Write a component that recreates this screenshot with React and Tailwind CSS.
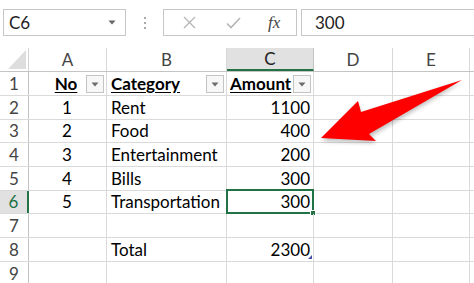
import React from 'react';

const cols = ['A', 'B', 'C', 'D', 'E'];
const colW = ['w-[78px]', 'w-[120px]', 'w-[87px]', 'w-[79px]', 'w-[77px]'];

const rows = [
  { no: '', cat: '', amt: '', header: true },
  { no: '1', cat: 'Rent', amt: '1100' },
  { no: '2', cat: 'Food', amt: '400' },
  { no: '3', cat: 'Entertainment', amt: '200' },
  { no: '4', cat: 'Bills', amt: '300' },
  { no: '5', cat: 'Transportation', amt: '300', selected: true },
  { no: '', cat: '', amt: '' },
  { no: '', cat: 'Total', amt: '2300', total: true },
  { no: '', cat: '', amt: '' },
];

const rowH = ['h-[24px]', 'h-[24px]', 'h-[23px]', 'h-[24px]', 'h-[24px]', 'h-[23px]', 'h-[24px]', 'h-[24px]', 'h-[24px]'];

const FilterBtn = () => (
  <div className="absolute right-[2px] top-[3px] w-[18px] h-[18px] border border-[#c4c4c4] bg-[#f7f7f7] flex items-center justify-center">
    <svg width="8" height="5" viewBox="0 0 8 5"><path d="M0.5 0.5 L7.5 0.5 L4 4.5 Z" fill="#6b6b6b" /></svg>
  </div>
);

const App = () => {
  return (
    <div className="w-[474px] h-[283px] bg-white overflow-hidden relative" style={{ fontFamily: 'Lato, "Liberation Sans", sans-serif' }}>
      {/* formula bar */}
      <div className="flex items-center h-[48px] pb-[3px]">
        <div className="ml-[3px] w-[123px] h-[27px] border border-[#c6c6c6] flex items-center justify-between pl-[5px] pr-[9px]">
          <span className="text-[17px] text-[#222]">C6</span>
          <svg width="8" height="5" viewBox="0 0 8 5"><path d="M0.5 0.5 L7.5 0.5 L4 4.5 Z" fill="#666" /></svg>
        </div>
        <div className="w-[37px] flex flex-col items-center gap-[3px]">
          <span className="w-[2px] h-[2px] bg-[#aaa]" />
          <span className="w-[2px] h-[2px] bg-[#aaa]" />
          <span className="w-[2px] h-[2px] bg-[#aaa]" />
        </div>
        <div className="w-[134px] h-[27px] border border-[#c6c6c6] flex items-center">
          <svg className="ml-[19px]" width="13" height="13" viewBox="0 0 13 13"><path d="M1 1 L12 12 M12 1 L1 12" stroke="#b5b5b5" strokeWidth="1.3" /></svg>
          <svg className="ml-[30px]" width="15" height="12" viewBox="0 0 15 12"><path d="M1 6.5 L5 10.5 L14 1" stroke="#b5b5b5" strokeWidth="1.6" fill="none" /></svg>
          <span className="ml-[27px] text-[17px] italic text-[#444]" style={{ fontFamily: '"Liberation Serif", serif' }}>fx</span>
        </div>
        <div className="ml-[4px] flex-1 h-[27px] border-y border-l border-[#c6c6c6] flex items-center pl-[13px]">
          <span className="text-[17px] text-[#222]">300</span>
        </div>
      </div>

      {/* column headers */}
      <div className="flex h-[24px] border-b border-[#c4c4c4]">
        <div className="w-[29px] shrink-0 border-r border-[#d4d4d4] relative">
          <svg className="absolute left-[8px] top-[2px]" width="18" height="19" viewBox="0 0 18 19"><path d="M18 0 L18 19 L0 19 Z" fill="#dedede" /></svg>
        </div>
        {cols.map((c, i) => (
          <div
            key={c}
            className={`${colW[i]} shrink-0 flex items-center justify-center text-[17px] border-r ${c === 'C' ? 'bg-[#e1e1e1] text-[#222] border-b-2 border-b-[#217346] border-r-[#c4c4c4]' : 'text-[#444] border-[#d8d8d8]'}`}
          >
            {c}
          </div>
        ))}
        <div className="flex-1" />
      </div>

      {/* rows */}
      {rows.map((r, i) => (
        <div key={i} className={`flex ${rowH[i]} border-b border-[#dadada] text-[17px]`}>
          <div className={`w-[29px] shrink-0 flex items-center justify-center border-r ${r.selected ? 'bg-[#e1e1e1] border-r-2 border-r-[#217346] text-[#217346]' : 'border-[#c4c4c4] text-[#444]'}`}>
            {i + 1}
          </div>
          <div className="w-[78px] shrink-0 border-r border-[#dadada] relative flex items-center justify-center pr-[1px] text-black">
            {r.header ? (
              <>
                <span className="font-bold underline underline-offset-[2px] mr-[2px]">No</span>
                <FilterBtn />
              </>
            ) : (
              r.no
            )}
          </div>
          <div className="w-[120px] shrink-0 border-r border-[#dadada] relative flex items-center pl-[4px] text-black">
            {r.header ? (
              <>
                <span className="font-bold underline underline-offset-[2px]">Category</span>
                <FilterBtn />
              </>
            ) : (
              r.cat
            )}
          </div>
          <div className={`w-[87px] shrink-0 relative flex items-center text-black ${r.header ? 'pl-[3px] border-r border-[#dadada]' : 'justify-end pr-[3px] border-r border-[#dadada]'}`}>
            {r.header ? (
              <>
                <span className="font-bold underline underline-offset-[2px]">Amount</span>
                <FilterBtn />
              </>
            ) : (
              r.amt
            )}
            {r.selected && (
              <>
                <div className="absolute left-[-1px] top-[-2px] right-[-1px] bottom-[-1px] border-2 border-[#217346]" />
                <div className="absolute right-[-3px] bottom-[-3px] w-[6px] h-[6px] bg-[#217346] border border-white" />
              </>
            )}
            {r.total && (
              <svg className="absolute right-[1px] bottom-[2px]" width="4" height="4" viewBox="0 0 4 4"><path d="M4 0 L4 4 L0 4 Z" fill="#4a4fa8" /></svg>
            )}
          </div>
          <div className="w-[79px] shrink-0 border-r border-[#dadada]" />
          <div className="w-[77px] shrink-0 border-r border-[#dadada]" />
          <div className="flex-1" />
        </div>
      ))}

      {/* red arrow annotation */}
      <svg className="absolute left-0 top-0 pointer-events-none" width="474" height="283" viewBox="0 0 474 283">
        <defs>
          <filter id="sh" x="-20%" y="-20%" width="140%" height="160%">
            <feGaussianBlur stdDeviation="2" />
          </filter>
        </defs>
        <path d="M322 141 L358 103 L361 114 L462 82 L370 137 L376 143 Z" fill="#000" opacity="0.25" filter="url(#sh)" />
        <path d="M321 138 L358 101 L361 112 L462 80 L369 134 L376 141 Z" fill="#ff0000" />
      </svg>
    </div>
  );
};

export default App;
